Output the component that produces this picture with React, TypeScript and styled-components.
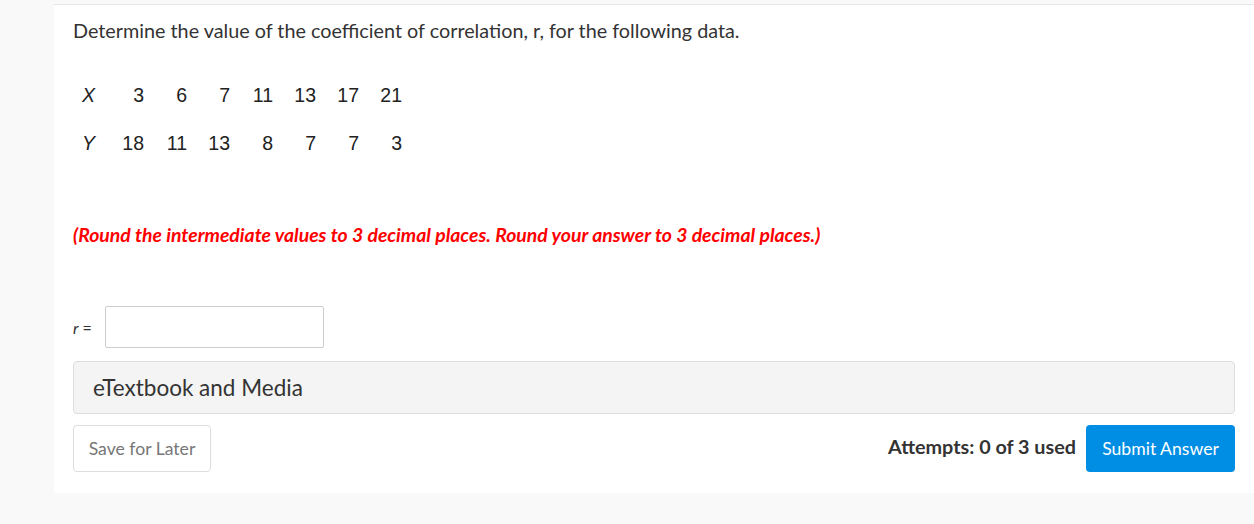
import styled, { createGlobalStyle } from 'styled-components';

const GlobalStyle = createGlobalStyle`
  html, body {
    margin: 0;
    padding: 0;
    background: #f9f9f9;
  }
  body {
    font-family: Lato, "Open Sans", sans-serif;
    color: #333;
  }
`;

const xs = [3, 6, 7, 11, 13, 17, 21];
const ys = [18, 11, 13, 8, 7, 7, 3];

const App = () => {
  return (
    <>
      <GlobalStyle />
      <Card>
        <Question>
          Determine the value of the coefficient of correlation, r, for the following data.
        </Question>
        <DataTable>
          <tbody>
            <tr>
              <VarCell>X</VarCell>
              {xs.map((v, i) => (
                <NumCell key={i}>{v}</NumCell>
              ))}
            </tr>
            <tr>
              <VarCell>Y</VarCell>
              {ys.map((v, i) => (
                <NumCell key={i}>{v}</NumCell>
              ))}
            </tr>
          </tbody>
        </DataTable>
        <Hint>
          (Round the intermediate values to 3 decimal places. Round your answer to 3 decimal places.)
        </Hint>
        <AnswerRow>
          <AnswerLabel>
            <i>r</i> =
          </AnswerLabel>
          <AnswerInput type="text" />
        </AnswerRow>
        <MediaBar>eTextbook and Media</MediaBar>
        <Footer>
          <SaveButton>Save for Later</SaveButton>
          <Actions>
            <Attempts>Attempts: 0 of 3 used</Attempts>
            <SubmitButton>Submit Answer</SubmitButton>
          </Actions>
        </Footer>
      </Card>
    </>
  );
};

export default App;

const Card = styled.div`
  margin: 4px 0 0 54px;
  border-top: 1px solid #e6e6e6;
  background: #fff;
  padding: 12px 19px 21px 19px;
`;

const Question = styled.div`
  font-size: 19.8px;
  line-height: 27px;
  color: #333;
`;

const DataTable = styled.table`
  margin-top: 27px;
  border-collapse: collapse;
  font-family: "Liberation Sans", Arial, sans-serif;
  font-size: 19.5px;
  color: #222;
`;

const VarCell = styled.td`
  height: 48px;
  padding: 0 6px 0 9px;
  font-style: italic;
  text-align: center;
`;

const NumCell = styled.td`
  height: 48px;
  padding: 0 0 0 21px;
  min-width: 22px;
  text-align: right;
`;

const Hint = styled.div`
  margin-top: 54px;
  font-size: 19.4px;
  line-height: 27px;
  font-style: italic;
  font-weight: 700;
  color: #ff0000;
`;

const AnswerRow = styled.div`
  margin-top: 58px;
  display: flex;
  align-items: center;
  gap: 13px;
`;

const AnswerLabel = styled.span`
  font-size: 16px;
  color: #333;
`;

const AnswerInput = styled.input`
  box-sizing: border-box;
  width: 219px;
  height: 42px;
  border: 1px solid #ccc;
  border-radius: 2px;
  outline: none;
`;

const MediaBar = styled.div`
  margin-top: 13px;
  box-sizing: border-box;
  height: 53px;
  display: flex;
  align-items: center;
  padding-left: 19px;
  background: #f4f4f4;
  border: 1px solid #ddd;
  border-radius: 4px;
  font-size: 22.5px;
  color: #333;
`;

const Footer = styled.div`
  margin-top: 11px;
  display: flex;
  justify-content: space-between;
  align-items: center;
`;

const SaveButton = styled.button`
  box-sizing: border-box;
  height: 47px;
  width: 138px;
  background: #fff;
  border: 1px solid #ddd;
  border-radius: 4px;
  font-family: Lato, sans-serif;
  font-size: 17.6px;
  color: #777;
`;

const Actions = styled.div`
  display: flex;
  align-items: center;
  gap: 10px;
`;

const Attempts = styled.span`
  font-size: 19.8px;
  font-weight: 700;
  color: #333;
  margin-top: -6px;
`;

const SubmitButton = styled.button`
  box-sizing: border-box;
  height: 47px;
  width: 149px;
  background: #008ee4;
  border: none;
  border-radius: 4px;
  font-family: Lato, sans-serif;
  font-size: 17.6px;
  color: #fff;
`;
